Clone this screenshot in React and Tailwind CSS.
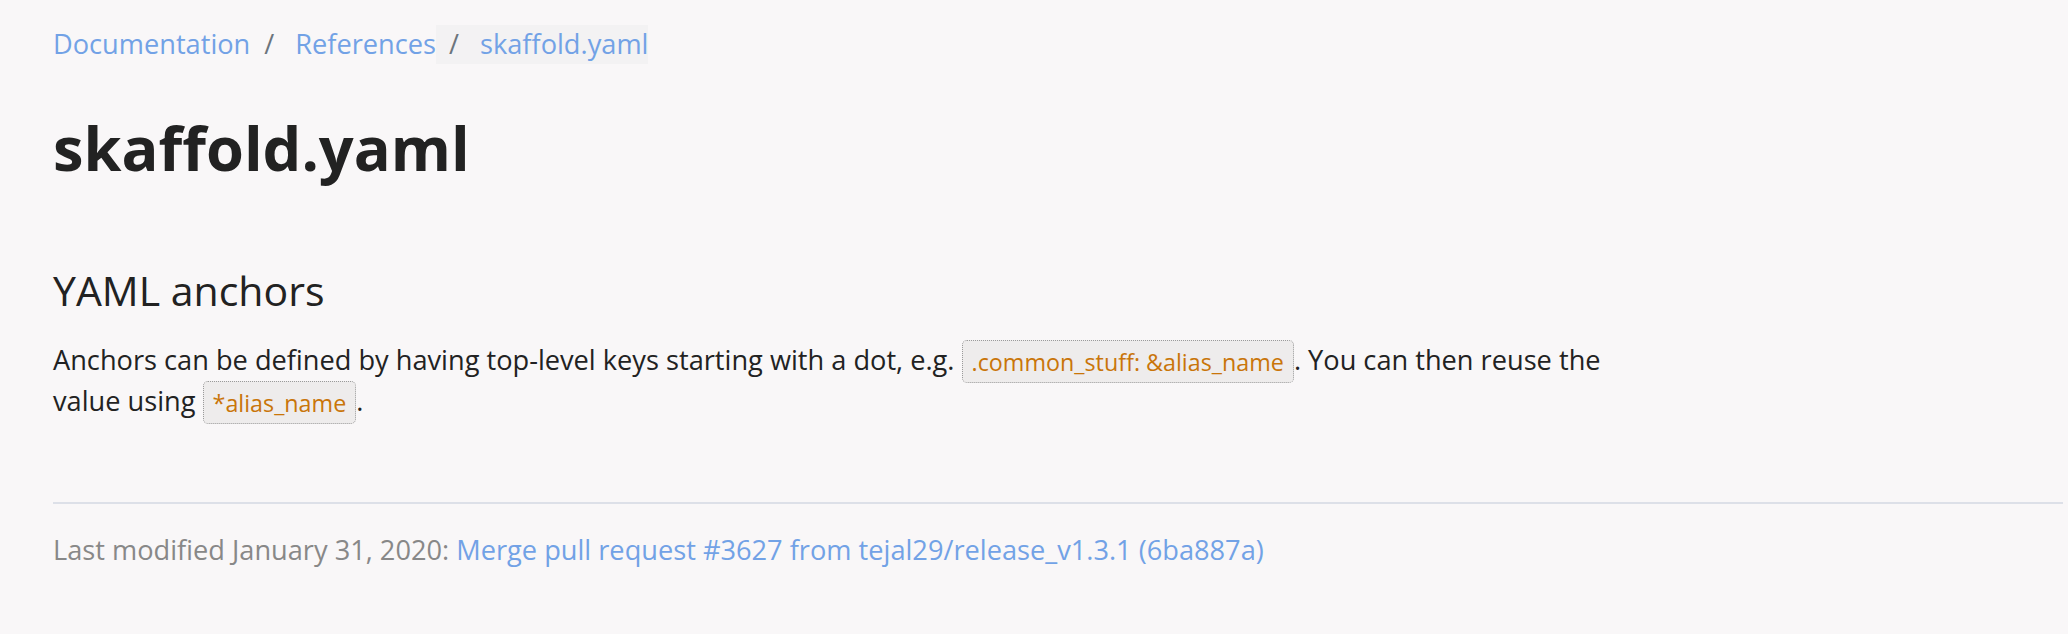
import React from "react";

function Code({ children }) {
  return (
    <code className="text-[23.3px] px-[9px] py-[4.5px] rounded-[5px] border border-dotted border-[#9a9a9a] bg-[#eeecec] text-[#c97509] [font-family:'Open_Sans',sans-serif]">
      {children}
    </code>
  );
}

export default function App() {
  return (
    <div className="min-h-[634px] w-full bg-[#f9f7f8] pt-[24px] pl-[53px] pr-[5px] [font-family:'Open_Sans',sans-serif] text-[#222222]">
      <nav className="flex items-center h-[40px] text-[27.2px] leading-[40px] text-[#72a2e6]">
        <span>Documentation</span>
        <span className="ml-[14px] mr-[21px] text-[#6c757d]">/</span>
        <span>References</span>
        <span className="flex items-center h-[39px] bg-[#f3f2f3]">
          <span className="ml-[13px] mr-[21px] text-[#6c757d]">/</span>
          <span>skaffold.yaml</span>
        </span>
      </nav>

      <h1 className="mt-[45px] text-[61.3px] font-bold leading-[77px] text-[#222222]">skaffold.yaml</h1>

      <h2 className="mt-[80px] text-[41px] font-normal leading-[48px] text-[#222222]">YAML anchors</h2>

      <p className="mt-[26px] max-w-[80%] text-[27.2px] leading-[40px] text-[#222222]">
        Anchors can be defined by having top-level keys starting with a dot, e.g. <Code>.common_stuff: &amp;alias_name</Code>. You can then reuse the value using <Code>*alias_name</Code>.
      </p>

      <div className="mt-[80px] h-[2px] bg-[#dde0e8]" />

      <div className="mt-[26px] text-[27.2px] leading-[40px] text-[#888888]">
        Last modified January 31, 2020: <span className="text-[#72a2e6]">Merge pull request #3627 from tejal29/release_v1.3.1 (6ba887a)</span>
      </div>
    </div>
  );
}
